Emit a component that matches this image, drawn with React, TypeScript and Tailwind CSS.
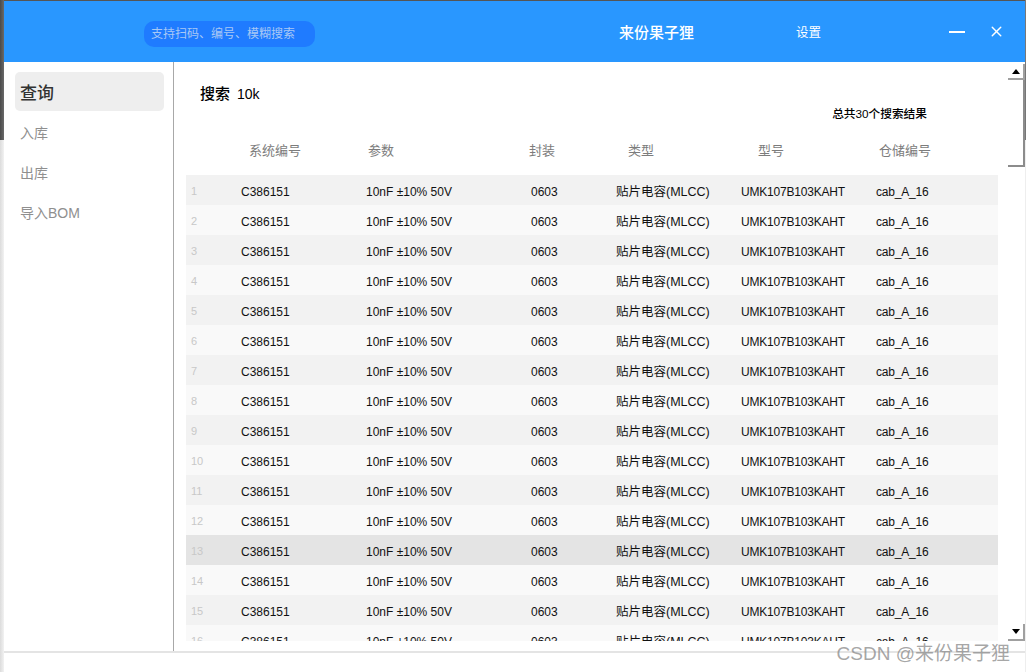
import { X } from 'lucide-react';

const rows = Array.from({ length: 16 }, (_, i) => i + 1);

const navItems = ['入库', '出库', '导入BOM'];

export default function App() {
  return (
    <div className="flex h-[672px] w-[1026px] overflow-hidden bg-white font-['Liberation_Sans','Noto_Sans_CJK_SC',sans-serif]">
      {/* desktop behind the window, left edge */}
      <div className="flex w-[4px] shrink-0 flex-col">
        <div className="h-[140px] bg-gradient-to-r from-[#4a4a4a] to-[#6a6a6a]" />
        <div className="flex-1 bg-gradient-to-r from-[#dcdcdc] to-[#f2f2f2]" />
      </div>

      <div className="relative flex min-w-0 flex-1 flex-col">
        {/* title bar */}
        <header className="flex h-[62px] shrink-0 items-center border-t border-[#555555] bg-[#2997ff] pl-[140px] pt-[4px] text-white">
          <div className="flex h-[26px] w-[171px] items-center rounded-[10px] bg-[#1f7bff] pl-[7px] text-[12px] text-[#a9c8f5]">
            支持扫码、编号、模糊搜索
          </div>
          <div className="ml-[304px] mb-[1px] w-[100px] text-[15px] font-medium">来份果子狸</div>
          <div className="ml-[77px] mb-[1px] w-[60px] text-[12.5px]">设置</div>
          <div className="ml-[93px] mb-[4px] h-[2px] w-[16px] bg-white" />
          <X className="ml-[23px] mb-[4px]" size={17} strokeWidth={2} />
        </header>

        <div className="flex min-h-0 flex-1">
          {/* sidebar */}
          <aside className="w-[170px] shrink-0 border-r border-[#a8a8a8] pl-[11px] pr-[9px] pt-[10px]">
            <div className="flex h-[39px] items-center rounded-[5px] bg-[#eeeeee] pl-[5px] pt-[4px] text-[17px] font-medium text-[#333333]">
              查询
            </div>
            <div className="mt-[2px] flex flex-col">
              {navItems.map((item) => (
                <div key={item} className="flex h-[40px] items-center pl-[5px] text-[14px] text-[#8f8f8f]">
                  {item}
                </div>
              ))}
            </div>
          </aside>

          {/* results */}
          <main className="flex h-[579px] min-w-0 flex-1 overflow-hidden">
            <div className="w-[824px] shrink-0 pl-[12px]">
              <div className="mt-[21px] flex h-[22px] items-center gap-[7px] pl-[14px] text-[14px] text-black">
                <span className="text-[15px] font-medium">搜索</span>
                <span>10k</span>
              </div>
              <div className="mt-[-1px] flex h-[20px] items-center justify-end pr-[71px] text-[11.7px] font-medium text-black">
                总共30个搜索结果
              </div>
              <div className="mt-[4px] flex h-[47px] items-center pb-[1px] text-[13px] text-[#7c7c7c]">
                <span className="ml-[63px] w-[119px]">系统编号</span>
                <span className="w-[161px]">参数</span>
                <span className="w-[99px]">封装</span>
                <span className="w-[130px]">类型</span>
                <span className="w-[121px]">型号</span>
                <span>仓储编号</span>
              </div>
              <div className="flex flex-col text-[12px] text-[#111111]">
                {rows.map((n) => (
                  <div
                    key={n}
                    className={
                      n === 13
                        ? 'flex h-[30px] w-[812px] shrink-0 items-center bg-[#e4e4e4] pt-[3px]'
                        : n % 2 === 1
                          ? 'flex h-[30px] w-[812px] shrink-0 items-center bg-[#f2f2f2] pt-[3px]'
                          : 'flex h-[30px] w-[812px] shrink-0 items-center bg-[#f9f9f9] pt-[3px]'
                    }
                  >
                    <span className="w-[55px] pl-[5px] text-[11px] text-[#c8c8c8]">{n}</span>
                    <span className="w-[125px]">C386151</span>
                    <span className="w-[165px]">10nF ±10% 50V</span>
                    <span className="w-[85px]">0603</span>
                    <span className="w-[125px] pt-[1px] text-[12.5px]">贴片电容(MLCC)</span>
                    <span className="w-[135px] tracking-[-0.2px]">UMK107B103KAHT</span>
                    <span className="tracking-[-0.2px]">cab_A_16</span>
                  </div>
                ))}
              </div>
            </div>

            {/* scrollbar */}
            <div className="ml-[10px] flex h-full w-[17px] shrink-0 flex-col pt-[2px]">
              <div className="flex h-[16px] shrink-0 items-center justify-center border-b-2 border-r-2 border-[#a0a0a0]">
                <div className="h-0 w-0 border-x-[4px] border-b-[5px] border-x-transparent border-b-black" />
              </div>
              <div className="h-[87px] shrink-0 border-b-2 border-r-2 border-[#8c8c8c]" />
              <div className="flex-1" />
              <div className="flex h-[17px] shrink-0 items-center justify-center border-b-2 border-r-2 border-[#a0a0a0]">
                <div className="h-0 w-0 border-x-[4px] border-t-[5px] border-x-transparent border-t-black" />
              </div>
            </div>
          </main>
        </div>

        {/* status bar */}
        <footer className="h-[21px] shrink-0 border-t-2 border-[#e4e4e4] bg-white" />

        <div className="absolute bottom-[4px] right-[15px] text-[19px] text-[#8f8f8f]/80">CSDN @来份果子狸</div>
      </div>

      {/* desktop behind the window, right edge */}
      <div className="flex w-[1px] shrink-0 flex-col">
        <div className="h-[140px] bg-[#777777]" />
        <div className="flex-1 bg-[#eeeeee]" />
      </div>
    </div>
  );
}
